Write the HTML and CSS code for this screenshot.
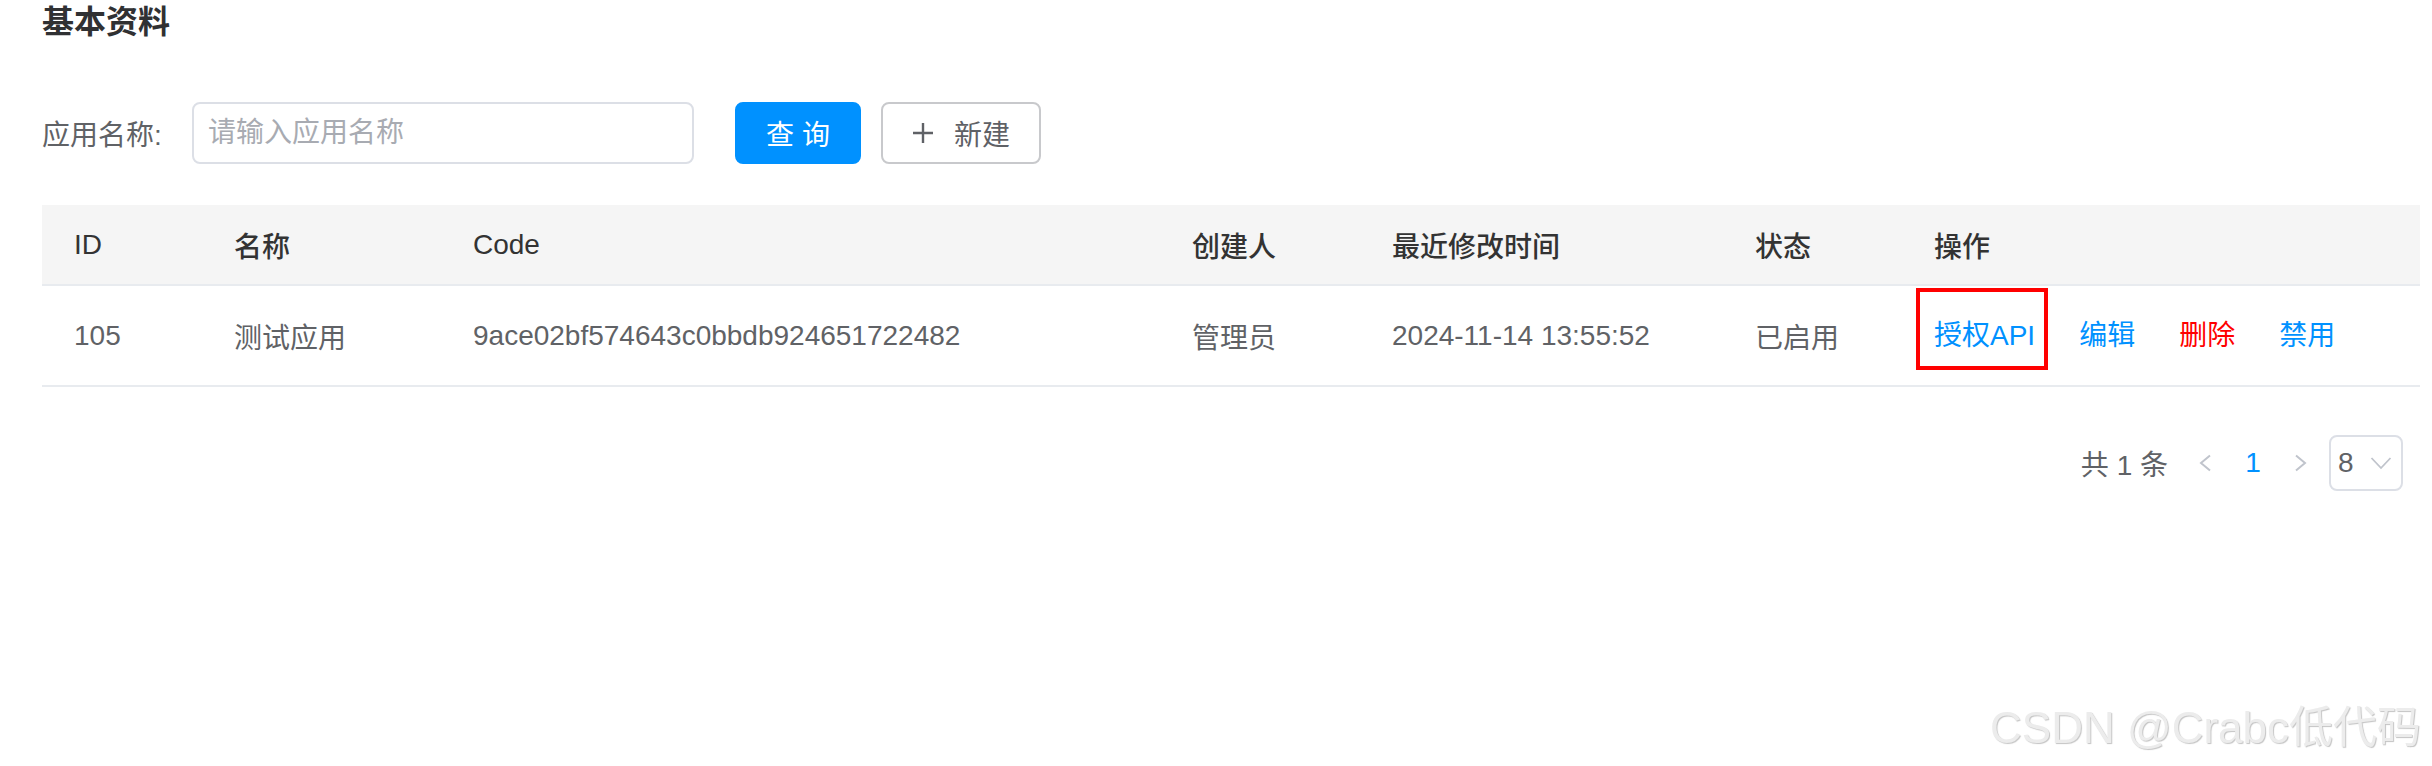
FILE: index.html
```html
<!DOCTYPE html>
<html lang="zh-CN">
<head>
<meta charset="utf-8">
<title>基本资料</title>
<link rel="stylesheet" href="styles.css">
</head>
<body>
<div class="page">
  <h1 class="title">基本资料</h1>

  <div class="search">
    <label class="label" for="appName">应用名称:</label>
    <input class="input" id="appName" type="text" placeholder="请输入应用名称">
    <button class="btn btn-primary" type="button">查 询</button>
    <button class="btn btn-default" type="button">
      <svg class="plus" width="22" height="22" viewBox="0 0 22 22"><path d="M11 1v20M1 11h20" stroke="#5f6166" stroke-width="2.4" fill="none"/></svg>
      <span>新建</span>
    </button>
  </div>

  <table class="table">
    <colgroup>
      <col class="c-id"><col class="c-name"><col class="c-code"><col class="c-creator"><col class="c-time"><col class="c-status"><col class="c-ops">
    </colgroup>
    <thead>
      <tr>
        <th>ID</th><th>名称</th><th>Code</th><th>创建人</th><th>最近修改时间</th><th>状态</th><th>操作</th>
      </tr>
    </thead>
    <tbody>
      <tr>
        <td>105</td>
        <td>测试应用</td>
        <td>9ace02bf574643c0bbdb924651722482</td>
        <td>管理员</td>
        <td>2024-11-14 13:55:52</td>
        <td>已启用</td>
        <td class="ops">
          <a class="act act-marked" href="#">授权API</a><a class="act" href="#">编辑</a><a class="act act-danger" href="#">删除</a><a class="act" href="#">禁用</a>
        </td>
      </tr>
    </tbody>
  </table>

  <div class="pager">
    <span class="total">共 1 条</span>
    <span class="pg-btn">
      <svg width="14" height="18" viewBox="0 0 14 18"><path d="M12 1.5L3 9l9 7.5" stroke="#c0c4cc" stroke-width="2" fill="none"/></svg>
    </span>
    <span class="pg-num">1</span>
    <span class="pg-btn">
      <svg width="14" height="18" viewBox="0 0 14 18"><path d="M2 1.5L11 9l-9 7.5" stroke="#c0c4cc" stroke-width="2" fill="none"/></svg>
    </span>
    <span class="size-select">
      <span class="size-val">8</span>
      <svg width="22" height="14" viewBox="0 0 22 14"><path d="M1.5 2l9.5 10 9.5-10" stroke="#c0c4cc" stroke-width="1.8" fill="none"/></svg>
    </span>
  </div>
</div>

<div class="watermark">CSDN @Crabc低代码</div>
</body>
</html>
```

FILE: styles.css
```css
* {
  box-sizing: border-box;
}

html, body {
  margin: 0;
  padding: 0;
  background: #ffffff;
}

body {
  font-family: "Liberation Sans", "Noto Sans CJK SC", sans-serif;
  font-size: 28px;
  color: #606266;
}

.page {
  padding: 0 12px 0 42px;
}

.title {
  margin: 0;
  font-size: 32px;
  line-height: 44px;
  font-weight: 600;
  color: #303133;
}

.search {
  margin-top: 58px;
  height: 62px;
  display: flex;
  align-items: center;
}

.label {
  width: 150px;
  flex-shrink: 0;
  font-size: 28px;
  color: #606266;
}

.input {
  width: 502px;
  height: 62px;
  border: 2px solid #dcdfe6;
  border-radius: 8px;
  padding: 0 14px;
  font-family: inherit;
  font-size: 28px;
  color: #606266;
  outline: none;
  background: #fff;
}

.input::placeholder {
  color: #a8abb2;
}

.btn {
  height: 62px;
  border-radius: 8px;
  font-family: inherit;
  font-size: 28px;
  display: flex;
  align-items: center;
  justify-content: center;
  cursor: pointer;
  padding: 0;
}

.btn-primary {
  margin-left: 41px;
  width: 126px;
  background: #0091ff;
  border: 2px solid #0091ff;
  color: #ffffff;
}

.btn-default {
  margin-left: 20px;
  width: 160px;
  background: #ffffff;
  border: 2px solid #c8c9cc;
  color: #5f6166;
  gap: 20px;
}

.plus {
  display: block;
}

.table {
  margin-top: 41px;
  width: 100%;
  table-layout: fixed;
  border-collapse: separate;
  border-spacing: 0;
}

.c-id { width: 160px; }
.c-name { width: 239px; }
.c-code { width: 719px; }
.c-creator { width: 200px; }
.c-time { width: 363px; }
.c-status { width: 179px; }
.c-ops { width: 518px; }

.table th,
.table td {
  text-align: left;
  padding: 0 0 0 32px;
  border-bottom: 2px solid #e8ebef;
  white-space: nowrap;
  vertical-align: middle;
}

.table th {
  height: 81px;
  background: #f5f5f5;
  font-weight: 500;
  color: #333333;
}

.table td {
  height: 101px;
  color: #606266;
}

.act {
  display: inline-block;
  line-height: 40px;
  margin-right: 44px;
  color: #0091ff;
  text-decoration: none;
  position: relative;
}

.act-danger {
  color: #ff0000;
}

.act-marked::after {
  content: "";
  position: absolute;
  top: -28px;
  bottom: -14px;
  left: -18px;
  right: -13px;
  border: 4px solid #ff0000;
}

.pager {
  margin-top: 48px;
  margin-right: 17px;
  height: 56px;
  display: flex;
  justify-content: flex-end;
  align-items: center;
  color: #606266;
}

.total {
  margin-right: 13px;
}

.pg-btn,
.pg-num {
  width: 48px;
  display: flex;
  justify-content: center;
  align-items: center;
}

.pg-num {
  color: #0091ff;
  font-weight: 500;
}

.size-select {
  margin-left: 4px;
  width: 74px;
  height: 56px;
  border: 2px solid #dcdfe6;
  border-radius: 8px;
  display: flex;
  align-items: center;
  padding-left: 7px;
  gap: 16px;
  color: #606266;
}

.watermark {
  position: fixed;
  right: 11px;
  bottom: 16px;
  font-family: "Liberation Sans", "Noto Sans CJK SC", sans-serif;
  font-size: 44px;
  line-height: 44px;
  color: #ececec;
  text-shadow: 1px 1px 1px #c4c4c4;
  white-space: nowrap;
  pointer-events: none;
}
```
